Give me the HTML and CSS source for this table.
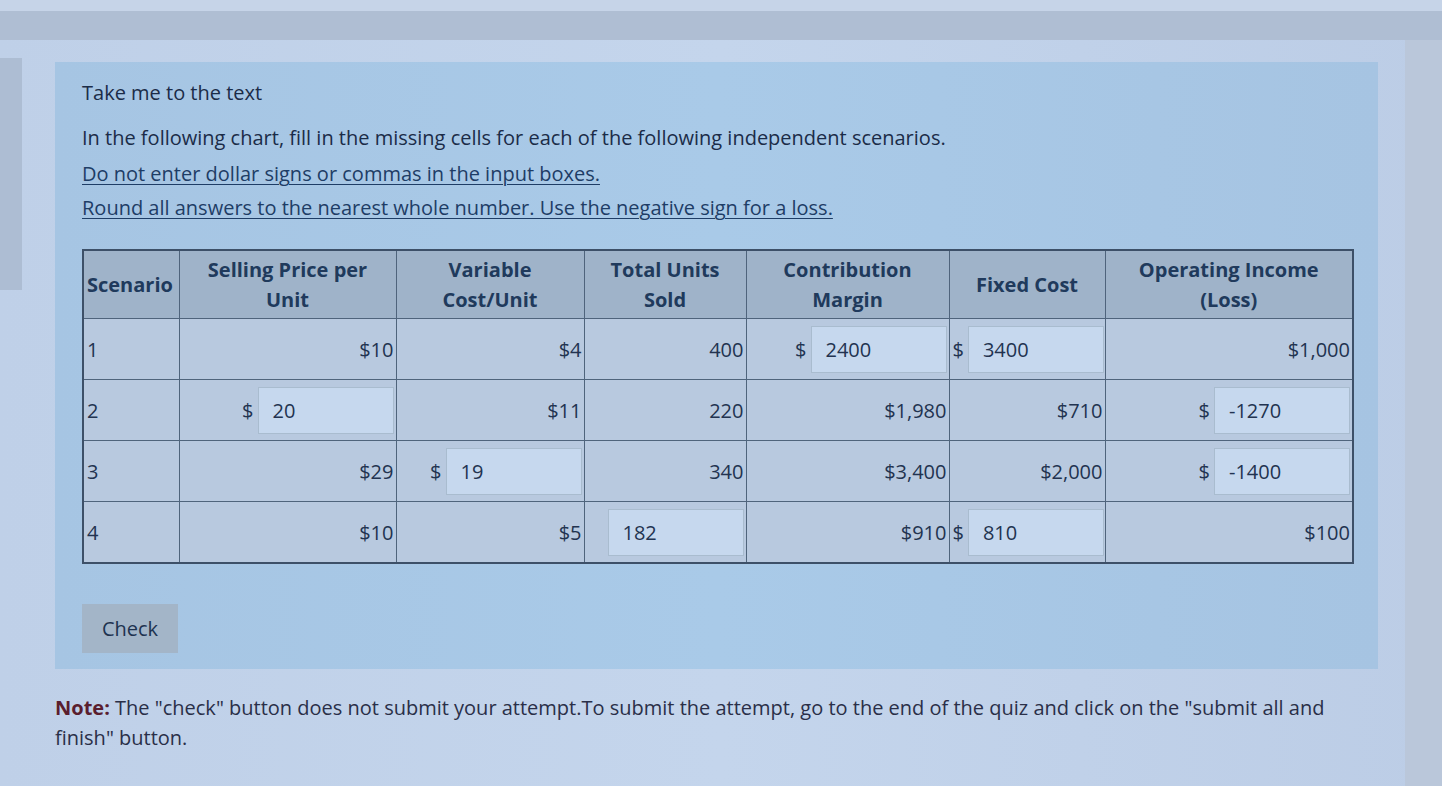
FILE: index.html
```html
<!DOCTYPE html>
<html>
<head>
<meta charset="utf-8">
<link rel="stylesheet" href="styles.css">
</head>
<body>
<div class="topstrip"></div>
<div class="topband"></div>
<div class="page">
  <div class="leftbar"></div>
  <div class="content">
    <div class="panel">
      <p class="take">Take me to the text</p>
      <p class="intro">In the following chart, fill in the missing cells for each of the following independent scenarios.</p>
      <p class="links"><a href="#">Do not enter dollar signs or commas in the input boxes.</a><br><a href="#">Round all answers to the nearest whole number. Use the negative sign for a loss.</a></p>
      <table class="grid">
        <colgroup>
          <col class="c1"><col class="c2"><col class="c3"><col class="c4"><col class="c5"><col class="c6"><col class="c7">
        </colgroup>
        <thead>
          <tr>
            <th class="left">Scenario</th>
            <th>Selling Price per<br>Unit</th>
            <th>Variable<br>Cost/Unit</th>
            <th>Total Units<br>Sold</th>
            <th>Contribution<br>Margin</th>
            <th>Fixed Cost</th>
            <th>Operating Income<br>(Loss)</th>
          </tr>
        </thead>
        <tbody>
          <tr>
            <td class="sc">1</td>
            <td class="num">$10</td>
            <td class="num">$4</td>
            <td class="num">400</td>
            <td class="num"><span class="inp"><span class="cur">$</span><span class="box">2400</span></span></td>
            <td class="num"><span class="inp"><span class="cur">$</span><span class="box">3400</span></span></td>
            <td class="num">$1,000</td>
          </tr>
          <tr>
            <td class="sc">2</td>
            <td class="num"><span class="inp"><span class="cur">$</span><span class="box">20</span></span></td>
            <td class="num">$11</td>
            <td class="num">220</td>
            <td class="num">$1,980</td>
            <td class="num">$710</td>
            <td class="num"><span class="inp"><span class="cur">$</span><span class="box">-1270</span></span></td>
          </tr>
          <tr>
            <td class="sc">3</td>
            <td class="num">$29</td>
            <td class="num"><span class="inp"><span class="cur">$</span><span class="box">19</span></span></td>
            <td class="num">340</td>
            <td class="num">$3,400</td>
            <td class="num">$2,000</td>
            <td class="num"><span class="inp"><span class="cur">$</span><span class="box">-1400</span></span></td>
          </tr>
          <tr>
            <td class="sc">4</td>
            <td class="num">$10</td>
            <td class="num">$5</td>
            <td class="num"><span class="inp"><span class="box">182</span></span></td>
            <td class="num">$910</td>
            <td class="num"><span class="inp"><span class="cur">$</span><span class="box">810</span></span></td>
            <td class="num">$100</td>
          </tr>
        </tbody>
      </table>
      <button class="check">Check</button>
    </div>
    <p class="note"><span class="label">Note:</span> The "check" button does not submit your attempt.To submit the attempt, go to the end of the quiz and click on the "submit all and finish" button.</p>
  </div>
  <div class="rightbar"></div>
</div>
</body>
</html>
```

FILE: styles.css
```css
html, body {
  margin: 0;
  padding: 0;
}
body {
  width: 1442px;
  height: 786px;
  overflow: hidden;
  background: #c2d3ea;
  font-family: "Open Sans", "Liberation Sans", sans-serif;
  color: #1b2c48;
}
.topstrip {
  height: 11px;
  background: #c6d4e8;
}
.topband {
  height: 29px;
  background: #afbed3;
}
.page {
  display: flex;
  height: 746px;
  background: linear-gradient(90deg, #bfd0e8, #c4d5ec 50%, #bccde6);
}
.leftbar {
  width: 22px;
  height: 232px;
  margin-top: 18px;
  background: #adbdd3;
  flex: none;
}
.content {
  width: 1323px;
  margin-left: 33px;
  padding-top: 22px;
  flex: none;
}
.rightbar {
  margin-left: 27px;
  width: 37px;
  background: #bac7da;
  flex: none;
}
.panel {
  background: linear-gradient(90deg, #a6c5e3, #a9cae8 50%, #a6c4e2);
  padding: 18px 28px 16px 27px;
}
p { margin: 0; }
.take {
  font-size: 20px;
  line-height: 26px;
}
.intro {
  font-size: 20px;
  line-height: 26px;
  margin-top: 19px;
}
.links {
  font-size: 20px;
  line-height: 34px;
  margin-top: 6px;
}
.links a {
  color: #1e3d66;
  text-decoration: underline;
  text-decoration-thickness: 1px;
  text-underline-offset: 3px;
}
.grid {
  margin-top: 24px;
  border-collapse: collapse;
  table-layout: fixed;
  width: 1270px;
  border: 2px solid #3d5068;
  font-size: 20px;
}
.c1 { width: 96px; }
.c2 { width: 217px; }
.c3 { width: 188px; }
.c4 { width: 162px; }
.c5 { width: 203px; }
.c6 { width: 156px; }
.c7 { width: 248px; }
th {
  background: #9fb3c9;
  color: #203a5c;
  font-weight: 700;
  font-size: 20px;
  line-height: 30px;
  height: 67px;
  text-align: center;
  border: 1px solid #4f647c;
  padding: 0 2px;
}
th.left {
  text-align: left;
  padding-left: 3px;
  padding-right: 0;
}
td {
  background: #b8c9df;
  border: 1px solid #4f647c;
  height: 60px;
  padding: 0 2px 0 3px;
  color: #223350;
}
td.sc {
  text-align: left;
}
td.num {
  text-align: right;
}
.inp {
  display: inline-flex;
  align-items: center;
  vertical-align: middle;
}
.cur {
  margin-right: 4px;
}
.box {
  display: inline-block;
  width: 120px;
  height: 45px;
  line-height: 45px;
  background: #c6d8ee;
  border: 1px solid #a9bccf;
  text-align: left;
  padding-left: 14px;
  color: #223350;
}
.check {
  display: block;
  margin-top: 40px;
  width: 96px;
  height: 49px;
  background: #a3b5c8;
  border: none;
  font-family: "Open Sans", "Liberation Sans", sans-serif;
  font-size: 20px;
  color: #1e3350;
  padding: 0;
}
.note {
  font-size: 20px;
  line-height: 30px;
  margin-top: 24px;
  color: #2a2f48;
  padding-right: 20px;
}
.note .label {
  font-weight: 700;
  color: #5a1e2e;
}
```
